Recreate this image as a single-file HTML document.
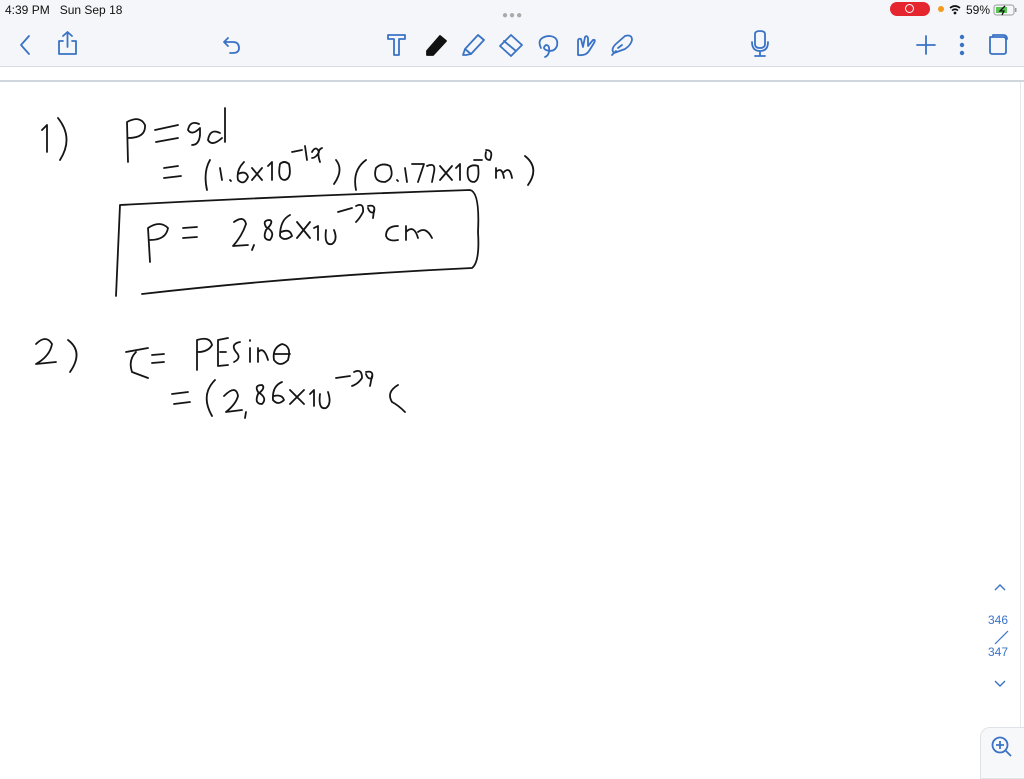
<!DOCTYPE html>
<html><head><meta charset="utf-8"><style>
html,body{margin:0;padding:0;width:1024px;height:768px;overflow:hidden;background:#fff;font-family:"Liberation Sans",sans-serif}
.top{position:absolute;left:0;top:0;width:1024px;height:66px;background:#f5f6f9}
.band{position:absolute;left:0;top:66px;width:1024px;height:13px;background:#fff;border-top:1px solid #d9dce2;border-bottom:2px solid #cfd6de}
.st{position:absolute;top:3px;font-size:12px;color:#111}
.pg{position:absolute;color:#3a73c6;font-size:12px;text-align:center}
</style></head><body>
<div class="top"></div><div class="band"></div>
<div class="st" style="left:5px">4:39 PM&nbsp;&nbsp; Sun Sep 18</div>
<div style="position:absolute;left:502px;top:10px;color:#aaa;font-size:10px;letter-spacing:1px">●●●</div>
<div style="position:absolute;left:890px;top:2px;width:40px;height:14px;border-radius:7px;background:#e5262f"></div>
<div style="position:absolute;left:905px;top:4px;width:7px;height:7px;border:1.5px solid #fff;border-radius:50%"></div>
<div style="position:absolute;left:938px;top:6px;width:6px;height:6px;border-radius:50%;background:#f39a1c"></div>
<div class="st" style="left:966px;top:3px">59%</div>
<svg style="position:absolute;left:948px;top:3px" width="70" height="14"><path d="M2 5 Q7 1 12 5 M4 7.5 Q7 5 10 7.5" stroke="#111" stroke-width="1.6" fill="none"/><circle cx="7" cy="10" r="1.4" fill="#111"/><rect x="46" y="2" width="20" height="10" rx="2.5" fill="none" stroke="#999"/><rect x="48" y="4" width="11" height="6" fill="#5cc658"/><path d="M57 3 L52 8 L56 8 L54 12" stroke="#111" stroke-width="1.3" fill="none"/><rect x="67" y="5" width="1.5" height="4" fill="#999"/></svg>
<svg style="position:absolute;left:0;top:28px" width="1024" height="36" fill="none" stroke="#3a73c6" stroke-width="1.8" stroke-linecap="round" stroke-linejoin="round">
<path d="M29 8 L21 17 L29 26"/>
<path d="M63 13 L59 13 L59 26 L76 26 L76 13 L72 13 M67.5 4 L67.5 19 M63 8 L67.5 4 L72 8"/>
<path d="M228 10 L224 14 L228 18 M224 14 L233 14 Q239 14 239 20 Q239 25 233 25 L230 25"/>
<path d="M388 7 L405 7 L405 11 L399 11 L399 27 L394 27 L394 11 L388 11 Z"/>
<path d="M427 23 L440 8 L446 13 L433 27 L427 27 Z" fill="#111" stroke="#111"/>
<path d="M463 27 L465 21 L478 7 L484 12 L471 26 L466 27 Z M465 21 L471 26"/>
<path d="M500 18 L511 7 L522 17 L511 28 Z M504 13 L516 23"/>
<path d="M541 20 Q536 10 548 8 Q559 8 557 18 Q554 25 546 22 Q542 20 546 17 Q550 17 549 24 Q548 28 545 29"/>
<path d="M578 27 L578 13 Q578 10 581 11 L583 19 L585 9 Q587 7 588 10 L588 18 L593 12 Q596 11 594 15 L589 23 Q586 28 578 27"/>
<path d="M612 27 L616 23 M614 25 Q610 21 617 15 L625 8 Q632 6 632 12 Q631 17 625 21 Z M618 20 L622 17"/>
<path d="M755 6 Q755 3 760 3 Q765 3 765 6 L765 16 Q765 20 760 20 Q755 20 755 16 Z M752 14 Q752 23 760 23 Q768 23 768 14 M760 23 L760 28 M755 28 L765 28"/>
<path d="M917 17 L935 17 M926 8 L926 26"/>
<circle cx="962" cy="9" r="1.3" fill="#3a73c6"/><circle cx="962" cy="17" r="1.3" fill="#3a73c6"/><circle cx="962" cy="25" r="1.3" fill="#3a73c6"/>
<path d="M990 9 L1003 9 Q1006 9 1006 12 L1006 24 Q1006 26 1003 26 L993 26 Q990 26 990 24 Z M993 9 L993 7 L1003 7 Q1007 7 1007 11"/>
</svg>
<div style="position:absolute;left:1020px;top:82px;width:1px;height:686px;background:#e5e7ea"></div>
<svg style="position:absolute;left:993px;top:582px" width="14" height="10"><path d="M2 8 L7 3 L12 8" stroke="#3a73c6" stroke-width="1.4" fill="none"/></svg>
<div class="pg" style="left:988px;top:613px">346</div>
<svg style="position:absolute;left:993px;top:628px" width="18" height="18"><path d="M2 16 L15 3" stroke="#3a73c6" stroke-width="1.2"/></svg>
<div class="pg" style="left:988px;top:645px">347</div>
<svg style="position:absolute;left:993px;top:678px" width="14" height="10"><path d="M2 3 L7 8 L12 3" stroke="#3a73c6" stroke-width="1.4" fill="none"/></svg>
<div style="position:absolute;left:980px;top:727px;width:50px;height:50px;border-radius:10px 0 0 0;background:#f7f8fa;border:1px solid #dfe2e6"></div>
<svg style="position:absolute;left:990px;top:735px" width="24" height="24" fill="none" stroke="#3a73c6" stroke-width="1.8"><circle cx="10" cy="10" r="7.5"/><path d="M15.5 15.5 L21 21 M6 10 L14 10 M10 6 L10 14"/></svg>
<svg style="position:absolute;left:0;top:0" width="1024" height="768" fill="none" stroke="#151515" stroke-width="1.8" stroke-linecap="round" stroke-linejoin="round">
<path d="M42 130 L47 125 L47 152 M58 118 Q74 138 60 160"/>
<path d="M128 162 L127 122 Q140 115 145 125 Q146 138 128 138 M155 130 L178 125 M156 142 L178 138"/>
<path d="M199 124 Q190 120 188 130 Q192 136 200 128 L200 135 Q199 145 192 145 M220 133 Q210 128 208 140 Q212 147 222 138 M225 108 L225 142"/>
<path d="M164 168 L178 166 M164 178 L181 176"/>
<path d="M210 160 Q203 172 207 190 M220 168 L222 180 M230 180 L231 181 M244 162 Q236 170 238 180 Q244 186 248 177 Q246 170 238 174 M252 168 L262 180 M262 168 L252 180 M268 166 L272 162 L272 180 M280 164 Q277 180 285 180 Q292 178 289 164 Q284 160 280 164 M292 152 L302 150 M305 146 L307 160 M312 152 Q316 145 319 152 Q316 158 312 158 M322 148 Q316 150 320 162 M336 160 Q344 170 334 184"/>
<path d="M366 160 Q352 170 356 190 M376 168 Q372 182 385 182 Q395 178 390 166 Q382 162 376 168 M397 180 L398 181 M405 168 L407 182 M412 164 L424 164 L418 182 M427 166 Q436 162 434 172 L432 182 M440 166 L452 180 M452 166 L440 180 M456 168 L460 164 L460 180 M468 168 Q466 182 474 182 Q480 180 478 166 Q472 164 468 168 M474 160 L482 160 M486 150 Q494 150 490 160 Q484 160 486 152 M496 168 L496 178 M496 172 Q502 166 504 178 M504 172 Q510 166 512 178 M525 156 Q540 168 528 185"/>
<path d="M120 205 L116 296 M120 205 Q290 196 470 190 Q480 192 478 232 Q480 262 472 268 Q300 276 142 294"/>
<path d="M150 262 L148 228 Q160 220 168 228 Q166 240 150 240 M183 228 L197 227 M183 238 L197 237"/>
<path d="M234 222 Q244 215 246 224 Q242 236 233 246 L248 245 M254 245 L252 250 M270 220 Q262 220 266 227 Q276 232 270 240 Q262 240 266 230 Q274 222 270 220 M290 215 Q280 220 280 236 Q284 242 292 236 Q290 228 281 232 M297 222 L310 238 M310 222 L297 238 M314 228 L318 226 L318 240 M326 230 Q324 246 332 244 Q338 240 334 230 M338 212 L352 208 M356 206 Q364 202 363 212 Q360 218 356 222 M368 206 Q376 204 374 212 Q370 214 368 208 M374 210 L373 218 M398 226 Q386 226 386 236 Q388 242 398 240 M406 226 L406 240 M406 232 Q414 224 418 238 M418 232 Q426 226 432 238"/>
<path d="M36 344 Q46 334 52 344 Q50 356 36 364 L56 362 M68 340 Q84 352 70 372"/>
<path d="M126 352 L148 348 M136 352 Q128 360 132 372 L148 378 M152 355 L164 354 M152 363 L164 362"/>
<path d="M197 370 L197 340 Q210 336 212 345 Q208 352 198 352 M228 338 L218 340 L218 366 L228 365 M220 352 L226 352 M240 342 Q230 344 236 352 Q242 358 234 362 M250 348 L250 362 M250 340 L250 341 M258 348 L258 362 M258 352 Q264 346 268 360 M282 344 Q272 348 274 360 Q280 368 288 360 Q292 346 282 344 M275 354 L290 354"/>
<path d="M172 394 L188 392 M174 404 L190 402"/>
<path d="M215 380 Q200 395 212 416 M224 396 Q236 384 238 396 Q236 404 226 412 L242 410 M246 412 L245 418 M262 385 Q254 385 258 392 Q268 398 262 404 Q254 404 258 394 Q266 388 262 385 M282 382 Q272 386 273 400 Q278 406 284 400 Q282 394 274 396 M290 390 L304 404 M304 390 L290 404 M310 394 L314 390 L314 406 M320 394 Q318 410 326 408 Q332 404 328 392 M336 378 L350 376 M354 372 Q362 368 362 378 Q358 384 352 386 M366 372 Q374 370 372 378 Q368 380 366 374 M372 376 L370 386 M398 385 Q386 392 392 402 Q398 405 405 412"/>
</svg>
</body></html>
